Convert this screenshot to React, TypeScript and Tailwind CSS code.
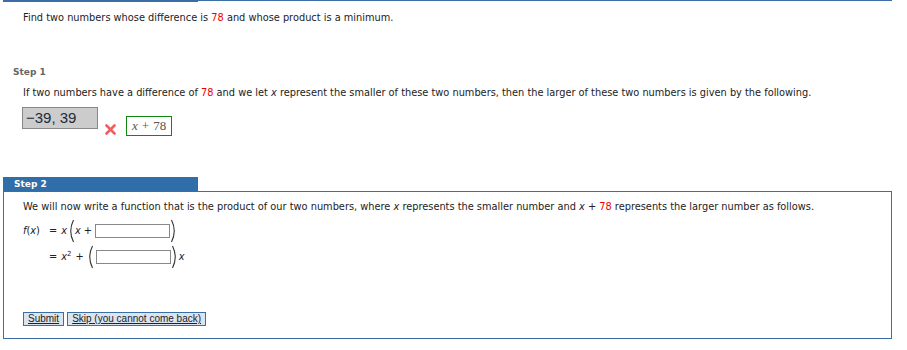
import React from 'react';

const Paren = ({ side }: { side: 'left' | 'right' }) => (
  <svg width="8" height="24" viewBox="0 0 8 24" className="shrink-0">
    <path
      d={side === 'left' ? 'M6.5 1 Q1 12 6.5 23' : 'M1.5 1 Q7 12 1.5 23'}
      fill="none"
      stroke="#333"
      strokeWidth="1.1"
    />
  </svg>
);

const Blank = () => <span className="inline-block w-[75px] h-[14px] border border-[#888] bg-white" />;

const Red = ({ children }: { children: React.ReactNode }) => <span className="text-[#e00]">{children}</span>;

export default function App() {
  return (
    <div className="w-[907px] h-[350px] bg-white text-[#222] font-['DejaVu_Sans',Verdana,sans-serif] text-[9.8px] leading-[14px]">
      <div className="ml-[3px] w-[889px]">
        {/* Step 1 header, scrolled off */}
        <div className="flex items-start">
          <div className="w-[195px] h-[2px] bg-[#3a6ea5]" />
          <div className="flex-1 h-px bg-[#3a6ea5]" />
        </div>

        <p className="pl-[20px] pt-[9px]">
          Find two numbers whose difference is <Red>78</Red> and whose product is a minimum.
        </p>

        {/* Step 1 */}
        <div className="pl-[10px] mt-[40px] text-[9px] font-bold text-[#666]">Step 1</div>
        <p className="pl-[20px] mt-[7px]">
          If two numbers have a difference of <Red>78</Red> and we let <i>x</i> represent the smaller of these two
          numbers, then the larger of these two numbers is given by the following.
        </p>
        <div className="flex items-start pl-[19px] mt-[7px]">
          <div className="w-[76px] h-[22px] bg-[#cccccc] border border-[#888] px-[3px] pt-[1px] font-['Liberation_Sans',Arial,sans-serif] text-[15px] leading-[18px] text-[#1c2a3a]">
            −39, 39
          </div>
          <svg width="11" height="11" viewBox="0 0 11 11" className="ml-[7px] mt-[17px]">
            <path d="M1.5 1.5 L9.5 9.5 M9.5 1.5 L1.5 9.5" stroke="#f06060" strokeWidth="2.6" strokeLinecap="round" />
          </svg>
          <div className="ml-[10px] mt-[9px] h-[20px] px-[5px] border border-[#118811] flex items-center font-['Liberation_Serif','Times_New_Roman',serif] text-[13px] text-[#555]">
            <i className="font-['Liberation_Serif',serif]">x</i>
            <span className="mx-[4px]">+</span>
            78
          </div>
        </div>

        {/* Step 2 */}
        <div className="mt-[41px] w-[195px] h-[14px] bg-[#2f6ea8] text-white font-bold text-[9px] leading-[14px] pl-[11px]">
          Step 2
        </div>
        <div className="h-[148px] border border-[#3a6ea5] pl-[19px] pt-[8px]">
          <p>
            We will now write a function that is the product of our two numbers, where <i>x</i> represents the smaller
            number and <i>x</i> + <Red>78</Red> represents the larger number as follows.
          </p>
          <div className="mt-[5px] flex items-center h-[24px]">
            <span className="w-[26px]">
              <i>f</i>(<i>x</i>)
            </span>
            <span className="mr-[4px]">=</span>
            <i>x</i>
            <Paren side="left" />
            <i>x</i>
            <span className="ml-[3px] mr-[3px]">+</span>
            <Blank />
            <Paren side="right" />
          </div>
          <div className="mt-[2px] flex items-center h-[24px] pl-[26px]">
            <span className="mr-[4px]">=</span>
            <i>x</i>
            <sup className="text-[7px]">2</sup>
            <span className="ml-[4px] mr-[2px]">+</span>
            <Paren side="left" />
            <span className="ml-[2px]" />
            <Blank />
            <Paren side="right" />
            <i>x</i>
          </div>
          <div className="mt-[43px] flex gap-[3px] font-['Liberation_Sans',Arial,sans-serif] text-[10px]">
            <button className="h-[14px] px-[4px] leading-[12px] bg-[#dbe5f1] border border-[#3a6ea5] underline text-[#222]">
              Submit
            </button>
            <button className="h-[14px] px-[4px] leading-[12px] bg-[#dbe5f1] border border-[#3a6ea5] underline text-[#222]">
              Skip (you cannot come back)
            </button>
          </div>
        </div>
      </div>
    </div>
  );
}
